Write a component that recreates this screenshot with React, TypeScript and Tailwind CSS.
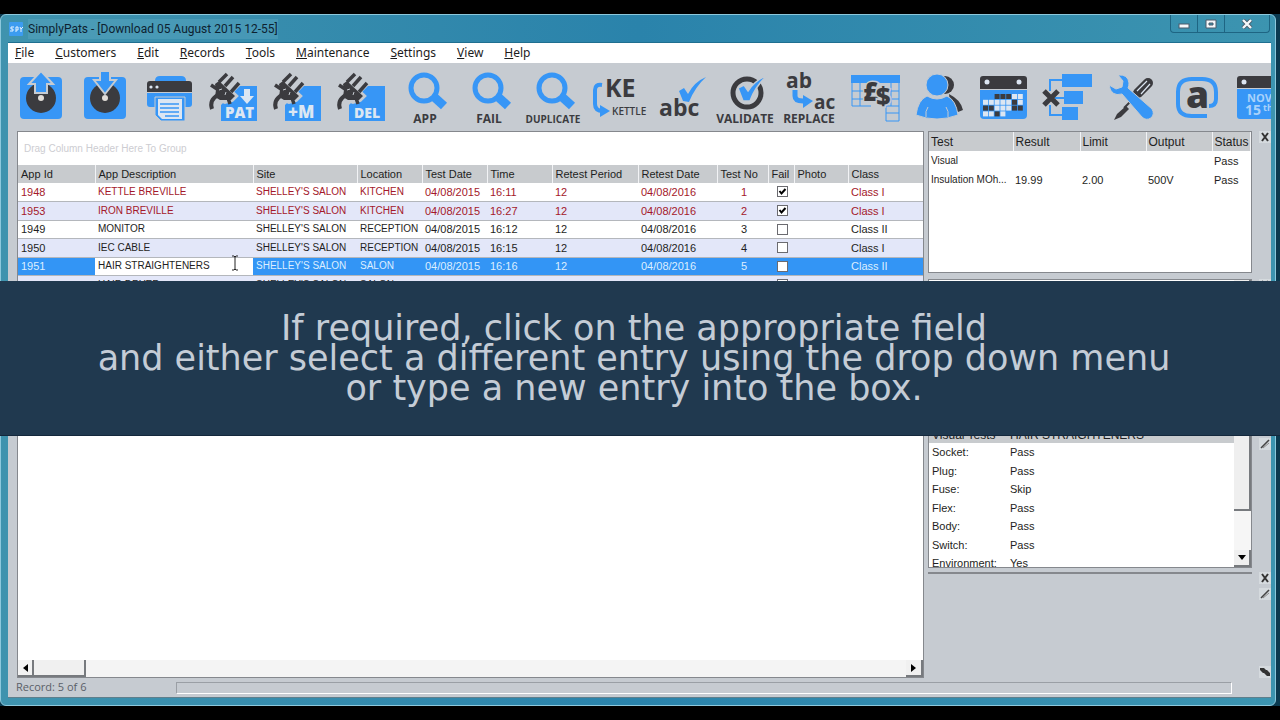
import React from 'react';

const BLUE = '#3796f6';
const DARK = '#3b3b3f';
const PALE = '#dce6f2';
const PANEL = '#c6cbd1';

interface ToolProps {
  name: string;
  label?: string;
  small?: boolean;
  children: React.ReactNode;
}

interface Appliance {
  id: string;
  description: string;
  location: string;
  time: string;
  testNo: number;
  fail: boolean;
  appClass: string;
}

const menuItems = ['File', 'Customers', 'Edit', 'Records', 'Tools', 'Maintenance', 'Settings', 'View', 'Help'];

const columns = [
  { title: 'App Id', width: 'w-[77px]' },
  { title: 'App Description', width: 'w-[158px]' },
  { title: 'Site', width: 'w-[104px]' },
  { title: 'Location', width: 'w-[65px]' },
  { title: 'Test Date', width: 'w-[65px]' },
  { title: 'Time', width: 'w-[65px]' },
  { title: 'Retest Period', width: 'w-[86px]' },
  { title: 'Retest Date', width: 'w-[79px]' },
  { title: 'Test No', width: 'w-[51px]' },
  { title: 'Fail', width: 'w-[26px]' },
  { title: 'Photo', width: 'w-[54px]' },
  { title: 'Class', width: 'w-auto' },
];

const appliances: Appliance[] = [
  { id: '1948', description: 'KETTLE BREVILLE', location: 'KITCHEN', time: '16:11', testNo: 1, fail: true, appClass: 'Class I' },
  { id: '1953', description: 'IRON BREVILLE', location: 'KITCHEN', time: '16:27', testNo: 2, fail: true, appClass: 'Class I' },
  { id: '1949', description: 'MONITOR', location: 'RECEPTION', time: '16:12', testNo: 3, fail: false, appClass: 'Class II' },
  { id: '1950', description: 'IEC CABLE', location: 'RECEPTION', time: '16:15', testNo: 4, fail: false, appClass: 'Class I' },
  { id: '1951', description: 'HAIR STRAIGHTENERS', location: 'SALON', time: '16:16', testNo: 5, fail: false, appClass: 'Class II' },
  { id: '1952', description: 'HAIR DRYER', location: 'SALON', time: '16:18', testNo: 6, fail: false, appClass: 'Class II' },
];

const visualTests = [
  ['Socket:', 'Pass'],
  ['Plug:', 'Pass'],
  ['Fuse:', 'Skip'],
  ['Flex:', 'Pass'],
  ['Body:', 'Pass'],
  ['Switch:', 'Pass'],
  ['Environment:', 'Yes'],
];

// d = dark day, l = light day, . = empty
const calendarDays = ['..dddll', 'llllldl', 'ddllldd', 'lldl...'];

const Tool: React.FC<ToolProps> = ({ name, label, small, children }) => (
  <button type="button" aria-label={name} className="relative h-[68px] w-16 shrink-0">
    <svg viewBox="0 0 64 68" className="h-[68px] w-16" fontFamily="Open Sans, sans-serif" fontWeight="700">
      {children}
    </svg>
    {label && (
      <span
        className={`absolute inset-x-0 top-[48px] text-center font-['Open_Sans',sans-serif] leading-4 font-bold text-[#3b3b3f] ${
          small ? 'text-[10px]' : 'text-xs'
        }`}
      >
        {label}
      </span>
    )}
  </button>
);

const DiscBase = () => (
  <>
    <rect x="11" y="14" width="42" height="42" rx="4" fill={BLUE} />
    <circle cx="32" cy="35" r="15" fill={DARK} />
    <circle cx="32" cy="35" r="3" fill="#e2ddd8" />
  </>
);

const PlugFile: React.FC<{ text: string; size: number; x: number }> = ({ text, size, x }) => (
  <>
    <path d="M39 23H56V58H20V42Z" fill={BLUE} />
    <path d="M13 21L18 17L35 33L31 37L24 39L14 35L12 28ZM28 33V40" fill={PANEL} stroke={PANEL} strokeWidth="4" />
    <path d="M18 19L26 11M24 23L32 14M30 29L38 20" stroke={DARK} strokeWidth="3.5" />
    <path d="M14 21L18 18L34 33L30 37L24 37L19 37L14 34L15 27Z" fill={DARK} />
    <path d="M10 22L16 26M27 35L29 41" stroke={DARK} strokeWidth="3.5" />
    <path d="M17 32Q8 37 11 46" fill="none" stroke={DARK} strokeWidth="4" />
    <path d="M18 27L21 26M24 32L25 29" stroke={PANEL} strokeWidth="1" />
    <text x={x} y="55" fontSize={size} fill={PALE} fontWeight="800">
      {text}
    </text>
  </>
);

const Magnifier = () => (
  <>
    <circle cx="31" cy="25" r="13" fill="none" stroke={BLUE} strokeWidth="5" />
    <path d="M40 33L51 43" stroke={BLUE} strokeWidth="9" />
  </>
);

const Toolbar = () => (
  <div className="flex h-[68px] shrink-0 overflow-hidden pl-px">
    <Tool name="Upload">
      <DiscBase />
      <path d="M32 8L44 21H38V30H26V21H20Z" fill={BLUE} stroke={PANEL} strokeWidth="2" />
    </Tool>
    <Tool name="Download">
      <DiscBase />
      <path d="M27 8H37V17H43L32 31L21 17H27Z" fill={BLUE} stroke={PANEL} strokeWidth="2" />
    </Tool>
    <Tool name="Print">
      <path d="M18 18Q18 13 23 13H44Q49 13 49 18Z" fill={BLUE} />
      <path d="M10 29V21Q10 18 13 18H52Q55 18 55 21V29Z" fill={DARK} />
      <circle cx="14" cy="24" r="1.6" fill={PALE} />
      <circle cx="20" cy="24" r="1.6" fill={PALE} />
      <path d="M10 30H55V41Q55 44 52 44H13Q10 44 10 41Z" fill={BLUE} />
      <path d="M18 34H48V58H24L18 52Z" fill={BLUE} stroke={PANEL} />
      <path d="M21 36H45V56H25L21 52Z" fill={PALE} />
      <path d="M23 41H42M23 45H42M23 49H42M28 53H42" stroke={BLUE} strokeWidth="1.5" />
    </Tool>
    <Tool name="Download to PAT">
      <PlugFile text="PAT" size={15} x={24} />
      <path d="M43 26H49V33H53L46 41L39 33H43Z" fill={PALE} />
    </Tool>
    <Tool name="Add manual test">
      <PlugFile text="+M" size={17} x={23} />
    </Tool>
    <Tool name="Delete from PAT">
      <PlugFile text="DEL" size={14} x={25} />
    </Tool>
    <Tool name="Find appliance" label="APP">
      <Magnifier />
    </Tool>
    <Tool name="Find fails" label="FAIL">
      <Magnifier />
    </Tool>
    <Tool name="Find duplicates" label="DUPLICATE" small>
      <Magnifier />
    </Tool>
    <Tool name="Expand text">
      <text x="20" y="34" fontSize="25" fill={DARK}>KE</text>
      <text x="27" y="52" fontSize="10" fontWeight="600" fill={DARK}>KETTLE</text>
      <path d="M17 22Q10 21 10 27V41Q10 48 18 48" fill="none" stroke={BLUE} strokeWidth="4" />
      <path d="M15 42L25 48L15 54Z" fill={BLUE} />
    </Tool>
    <Tool name="Spelling">
      <text x="10" y="53" fontSize="23" fill={DARK}>abc</text>
      <path d="M30 28L35 25L39 31Q45 19 57 14Q46 24 40 39L34 38Z" fill={BLUE} />
    </Tool>
    <Tool name="Validate" label="VALIDATE">
      <circle cx="34" cy="30" r="14" fill="none" stroke={DARK} strokeWidth="5" />
      <path d="M25 25L31 22L35 28Q42 17 55 12Q43 22 37 38L30 38Z" fill={BLUE} stroke={PANEL} strokeWidth="1.5" />
    </Tool>
    <Tool name="Replace" label="REPLACE">
      <text x="9" y="25" fontSize="21" fill={DARK}>ab</text>
      <text x="37" y="46" fontSize="19" fill={DARK}>ac</text>
      <path d="M18 27V33Q18 38 26 38" fill="none" stroke={BLUE} strokeWidth="5" />
      <path d="M26 32L36 38L26 45Z" fill={BLUE} />
    </Tool>
    <Tool name="Prices">
      <rect x="10" y="12" width="49" height="8" fill={BLUE} />
      <path
        d="M11 20V43H30M11 28H24M11 36H24M19 20V43M58 20V58H45V43H58M50 20V43M48 28H58M48 36H58M45 50H58"
        fill="none"
        stroke={BLUE}
      />
      <g fill={DARK} stroke={PANEL} strokeWidth="3" paintOrder="stroke" fontWeight="800">
        <text x="22" y="38" fontSize="26">£</text>
        <text x="35" y="42" fontSize="25">$</text>
      </g>
    </Tool>
    <Tool name="Customers">
      <circle cx="40" cy="22" r="9" fill={DARK} />
      <path d="M44 31Q56 37 58 47L53 49L45 40Z" fill={DARK} />
      <circle cx="32" cy="22" r="11" fill={BLUE} stroke={PANEL} />
      <path d="M22 33Q32 39 42 33Q51 37 53 52Q42 56 32 56Q21 56 11 52Q13 37 22 33Z" fill={BLUE} stroke={PANEL} />
      <path d="M21 54Q20 48 23 44M43 54Q44 48 41 44" stroke={PANEL} fill="none" />
    </Tool>
    <Tool name="Calendar">
      <path d="M11 26V16Q11 13 14 13H55Q58 13 58 16V26Z" fill={DARK} />
      <circle cx="18" cy="19" r="2.5" fill={PALE} />
      <circle cx="50" cy="19" r="2.5" fill={PALE} />
      <path d="M11 27H58V52Q58 56 54 56H15Q11 56 11 52Z" fill={BLUE} />
      {calendarDays.map((row, y) =>
        row.split('').map((day, x) =>
          day === '.' ? null : (
            <rect key={`${x}-${y}`} x={14 + x * 5.8} y={31 + y * 5.8} width="5" height="5" fill={day === 'd' ? DARK : PALE} />
          ),
        ),
      )}
    </Tool>
    <Tool name="Delete group">
      <path d="M29 11H59V24H29ZM31 28H50V41H31ZM29 44H45V57H29Z" fill={BLUE} />
      <path d="M29 17H17V28M22 35H31M17 42V52H29" fill="none" stroke={BLUE} strokeWidth="2" />
      <path d="M11 28L25 42M25 28L11 42" stroke={DARK} strokeWidth="5" />
    </Tool>
    <Tool name="Settings">
      <path d="M41 30L51 20" stroke={DARK} strokeWidth="10" strokeLinecap="round" />
      <path d="M40 28L50 18M44 31L53 21" stroke={PALE} strokeWidth="1.2" />
      <path d="M34 38L27 45" stroke={DARK} strokeWidth="2" />
      <path d="M29 43L20 51L17 57L24 54L32 46Z" fill={DARK} />
      <path
        d="M21 12Q31 11 32 20Q32 23 31 25L55 46Q58 51 54 55Q49 58 45 54L25 31Q14 34 12 22L19 26L25 24L26 18Z"
        fill={BLUE}
        stroke={PANEL}
        strokeWidth="1"
      />
    </Tool>
    <Tool name="Email">
      <path
        d="M46 53H31Q17 53 17 41V29Q17 16 31 16H41Q55 16 55 29V36Q55 43 48 43"
        fill="none"
        stroke={BLUE}
        strokeWidth="4"
      />
      <text x="25" y="45" fontSize="37" fontWeight="800" fill={DARK}>a</text>
    </Tool>
    <Tool name="Date">
      <path d="M12 25V16Q12 13 15 13H59V25Z" fill={DARK} />
      <circle cx="19" cy="19" r="2.5" fill={PALE} />
      <path d="M12 26H59V56H15Q12 56 12 53Z" fill={BLUE} />
      <text x="22" y="39" fontSize="11" fill="#a9d2fb">NOV</text>
      <text x="20" y="52" fontSize="14" fill="#a9d2fb">15</text>
      <text x="38" y="48" fontSize="9" fill="#a9d2fb">th</text>
    </Tool>
  </div>
);

const TitleBar = () => (
  <div className="flex h-[28px] shrink-0 items-start justify-between border-b border-[#1f6f90]">
    <div className="flex h-full items-center gap-[5px] pl-px">
      <svg viewBox="0 0 14 14" className="h-3.5 w-3.5">
        <rect width="14" height="14" rx="1" fill="#3c9cf0" />
        <path d="M5 5H2V7H4V9H1M7 10V5H9V8H7M11 5L12 7L14 5M12 7V10" fill="none" stroke="#e8f4ff" />
      </svg>
      <h1 className="bg-[#5fa9c4]/40 font-[Roboto,sans-serif] text-xs leading-5 text-[#0d2230]">
        SimplyPats - [Download 05 August 2015 12-55]
      </h1>
    </div>
    <div className="mr-px flex h-[18px] rounded-b border border-t-0 border-[#1e6583]">
      <button type="button" aria-label="Minimise" className="flex w-[27px] items-center justify-center border-r border-[#1e6583]">
        <svg viewBox="0 0 12 10" className="h-2.5 w-3">
          <rect x="1" y="5" width="10" height="4" fill="#f4f7fa" stroke="#4b5a6a" />
        </svg>
      </button>
      <button type="button" aria-label="Maximise" className="flex w-[27px] items-center justify-center border-r border-[#1e6583]">
        <svg viewBox="0 0 12 10" className="h-2.5 w-3">
          <path d="M1 1H11V9H1ZM4 4V6H8V4Z" fill="#f4f7fa" fillRule="evenodd" stroke="#4b5a6a" />
        </svg>
      </button>
      <button type="button" aria-label="Close" className="flex w-[44px] items-center justify-center">
        <svg viewBox="0 0 12 10" className="h-2.5 w-3">
          <path d="M2 1L10 9M10 1L2 9" stroke="#4b5a6a" strokeWidth="4" />
          <path d="M2 1L10 9M10 1L2 9" stroke="#f4f7fa" strokeWidth="2.4" />
        </svg>
      </button>
    </div>
  </div>
);

const MenuBar = () => (
  <nav className="flex h-5 shrink-0 items-center gap-[21px] bg-white pl-[7px] font-['Noto_Sans',sans-serif] text-xs text-[#1c1c1c]">
    {menuItems.map((item) => (
      <button key={item} type="button">
        <span className="underline">{item[0]}</span>
        {item.slice(1)}
      </button>
    ))}
  </nav>
);

const FailBox: React.FC<{ id: string; checked: boolean }> = ({ id, checked }) => (
  <span className="relative mx-auto block h-[11px] w-[11px]">
    <input
      type="checkbox"
      aria-label={`Fail ${id}`}
      defaultChecked={checked}
      className="peer block h-[11px] w-[11px] appearance-none border border-[#6b6b70] bg-white"
    />
    <svg viewBox="0 0 11 11" className="pointer-events-none absolute inset-0 hidden h-[11px] w-[11px] peer-checked:block">
      <path d="M2.5 5L4.5 7.5L8.5 3" fill="none" stroke="#000" strokeWidth="2" />
    </svg>
  </span>
);

const rowStyle = (index: number, fail: boolean, selected: boolean) => {
  if (selected) return 'h-[18px] bg-[#3395f5] text-[#dceeff]';
  const stripe = index % 2 ? 'h-[19px] bg-[#e3e7f9]' : 'h-[18px] bg-white';
  return `${stripe} ${fail ? 'text-[#a3182a]' : 'text-[#1e1e22]'}`;
};

const ApplianceTable = () => (
  <table className="w-full table-fixed border-collapse text-left text-[11px] leading-[14px] whitespace-nowrap">
    <thead>
      <tr className="h-[18px] bg-[#c8cbce]">
        {columns.map((column) => (
          <th
            key={column.title}
            className={`${column.width} border-r border-[#f2f3f5] py-0 pr-0 pl-[3px] font-normal text-[#1e1e22] last:border-r-0`}
          >
            {column.title}
          </th>
        ))}
      </tr>
    </thead>
    <tbody>
      {appliances.map((app, index) => {
        const selected = app.id === '1951';
        return (
          <tr key={app.id} className={`${rowStyle(index, app.fail, selected)} border-b border-[#b4b7bc] [&>td]:py-0 [&>td]:pr-0 [&>td]:pl-[3px]`}>
            <td>{app.id}</td>
            <td className={`text-[10px] ${selected ? 'bg-white text-[#1e1e22]' : ''}`}>
              {selected ? (
                <div className="relative">
                  <input aria-label="App Description" defaultValue={app.description} className="block h-[14px] w-full outline-none" />
                  <svg viewBox="0 0 8 16" className="absolute -top-1 right-3.5 h-4 w-2">
                    <path d="M1 1H3L4 2L5 1H7M4 2V14M1 15H3L4 14L5 15H7" fill="none" stroke="#222" />
                  </svg>
                </div>
              ) : (
                app.description
              )}
            </td>
            <td className="text-[10px]">SHELLEY'S SALON</td>
            <td className="text-[10px]">{app.location}</td>
            <td>04/08/2015</td>
            <td>{app.time}</td>
            <td>12</td>
            <td>04/08/2016</td>
            <td className="text-center">{app.testNo}</td>
            <td>
              <FailBox id={app.id} checked={app.fail} />
            </td>
            <td></td>
            <td>{app.appClass}</td>
          </tr>
        );
      })}
    </tbody>
  </table>
);

const ResultsTable = () => (
  <table className="w-full table-fixed border-collapse text-left text-[11px] leading-[14px] whitespace-nowrap text-[#1e1e22]">
    <thead>
      <tr className="h-[19px] bg-[#c8cbce] text-xs [&>th]:border-r [&>th]:border-[#f2f3f5] [&>th]:py-0 [&>th]:pr-0 [&>th]:pl-0.5 [&>th]:font-normal">
        <th className="w-[84px]">Test</th>
        <th className="w-[67px]">Result</th>
        <th className="w-[66px]">Limit</th>
        <th className="w-[66px]">Output</th>
        <th>Status</th>
      </tr>
    </thead>
    <tbody className="[&_td]:py-0 [&_td]:pr-0 [&_td]:pl-0.5">
      <tr className="h-[19px]">
        <td className="text-[10px]">Visual</td>
        <td></td>
        <td></td>
        <td></td>
        <td>Pass</td>
      </tr>
      <tr className="h-[19px]">
        <td className="text-[10px]">Insulation MOh...</td>
        <td>19.99</td>
        <td>2.00</td>
        <td>500V</td>
        <td>Pass</td>
      </tr>
    </tbody>
  </table>
);

const CloseIcon = () => (
  <button type="button" aria-label="Close panel" className="flex h-3 w-3 items-center justify-center bg-[#d5dade]">
    <svg viewBox="0 0 10 10" className="h-2.5 w-2.5">
      <path d="M2 1L8 9M8 1L2 9" stroke="#333" strokeWidth="2" />
    </svg>
  </button>
);

const PinIcon = () => (
  <button type="button" aria-label="Pin panel" className="flex h-3 w-3 items-center justify-center bg-[#d5dade]">
    <svg viewBox="0 0 10 10" className="h-2.5 w-2.5">
      <path d="M1 9L9 1" stroke="#444" strokeWidth="1.6" />
      <path d="M3 9L9 4" stroke="#888" />
    </svg>
  </button>
);

const SidePanels = () => (
  <div className="flex w-[347px] shrink-0 flex-col pl-1">
    <section className="flex h-[142px] shrink-0 justify-between">
      <div className="w-[324px] border border-[#85888d] bg-white">
        <ResultsTable />
      </div>
      <CloseIcon />
    </section>

    <section className="mt-1.5 flex h-[289px] shrink-0 justify-between">
      <div className="flex w-[324px] border border-[#85888d] bg-white">
        <div className="flex min-w-0 flex-1 flex-col justify-end overflow-hidden text-[#1e1e22]">
          <div className="flex h-4 shrink-0 items-center bg-[#c8cbce] pl-[3px] text-xs">
            <h2 className="w-[78px]">Visual Tests</h2>
            <span>HAIR STRAIGHTENERS</span>
          </div>
          <dl className="h-[124px] shrink-0 overflow-hidden text-[11px]">
            {visualTests.map(([name, value]) => (
              <div key={name} className="flex pl-[3px] leading-[19px] even:leading-[18px]">
                <dt className="w-[78px]">{name}</dt>
                <dd>{value}</dd>
              </div>
            ))}
          </dl>
        </div>
        <div className="flex w-[17px] flex-col justify-between bg-[#f6f6f6]">
          <div className="h-[231px] border-r-2 border-b-2 border-[#777a7e] bg-[#efefef]" />
          <button type="button" aria-label="Scroll down" className="flex h-[17px] items-center justify-center border-r-2 border-b-2 border-[#777a7e] bg-[#efefef]">
            <svg viewBox="0 0 8 5" className="h-[5px] w-2">
              <path d="M0 0H8L4 5Z" fill="#000" />
            </svg>
          </button>
        </div>
      </div>
      <div className="flex flex-col">
        <CloseIcon />
        <div className="mt-[147px]">
          <PinIcon />
        </div>
      </div>
    </section>

    <section className="mt-1 flex flex-1 justify-between">
      <div className="w-[324px] border-t-2 border-[#85888d]" />
      <div className="flex flex-col items-end gap-1">
        <CloseIcon />
        <PinIcon />
        <svg viewBox="0 0 12 12" className="mt-auto h-3 w-3 bg-[#d5dade]">
          <path d="M1 2H5L7 4H8L11 7V10H8L5 7H4L1 4Z" fill="#333" />
        </svg>
      </div>
    </section>
  </div>
);

const MainPanel = () => (
  <main className="ml-[9px] flex min-w-0 flex-1 flex-col border border-[#85888d] bg-white">
    <p className="h-[33px] shrink-0 pl-1.5 text-[10px] leading-[33px] text-[#cdcdd2]">Drag Column Header Here To Group</p>
    <ApplianceTable />
    <div className="mt-auto flex h-[17px] shrink-0 bg-[#f4f4f4]">
      <button type="button" aria-label="Scroll left" className="flex w-4 items-center justify-center border-r-2 border-b-2 border-[#777a7e] bg-[#f2f2f2]">
        <svg viewBox="0 0 5 8" className="h-2 w-[5px]">
          <path d="M5 0V8L0 4Z" fill="#000" />
        </svg>
      </button>
      <div className="w-[52px] border-r-2 border-b-2 border-[#777a7e] bg-[#f0f0f0]" />
      <button type="button" aria-label="Scroll right" className="ml-auto flex w-[17px] items-center justify-center border-r-2 border-b-2 border-[#777a7e] bg-[#f0f0f0]">
        <svg viewBox="0 0 5 8" className="h-2 w-[5px]">
          <path d="M0 0V8L5 4Z" fill="#000" />
        </svg>
      </button>
    </div>
  </main>
);

const StatusBar = () => (
  <footer className="flex h-[19px] shrink-0 items-center pl-2 font-['Open_Sans',sans-serif] text-[11px] text-[#5a6068]">
    <span className="w-40">Record: 5 of 6</span>
    <div className="mr-[39px] h-3 flex-1 border border-t-[#9a9fa5] border-r-white border-b-white border-l-[#9a9fa5]" />
  </footer>
);

const App: React.FC = () => {
  return (
    <div className="relative flex min-h-screen flex-col bg-black py-3.5 font-['Liberation_Sans',Arial,sans-serif]">
      <div className="flex flex-1 bg-[#0b3a50] pr-1">
        <div className="flex min-w-0 flex-1 flex-col rounded-md border border-[#8cc8dc] bg-linear-to-r from-[#3f93ae] via-[#2a83ab] to-[#3c94b0] pr-1 pb-[7px] pl-[7px]">
          <TitleBar />
          <div className="flex min-h-0 flex-1 flex-col border-b border-[#5f7f8c] bg-[#c6cbd1]">
            <MenuBar />
            <Toolbar />
            <div className="flex flex-1">
              <MainPanel />
              <SidePanels />
            </div>
            <StatusBar />
          </div>
        </div>
      </div>

      <div className="absolute inset-x-0 top-[281px] flex h-[155px] items-center justify-center border-b border-[#14283c] bg-[#20394f] pr-3">
        <p className="text-center font-['DejaVu_Sans',Verdana,sans-serif] text-[35px] leading-[30px] whitespace-nowrap text-[#c4ccd6]">
          If required, click on the appropriate field
          <br />
          and either select a different entry using the drop down menu
          <br />
          or type a new entry into the box.
        </p>
      </div>
    </div>
  );
};

export default App;
